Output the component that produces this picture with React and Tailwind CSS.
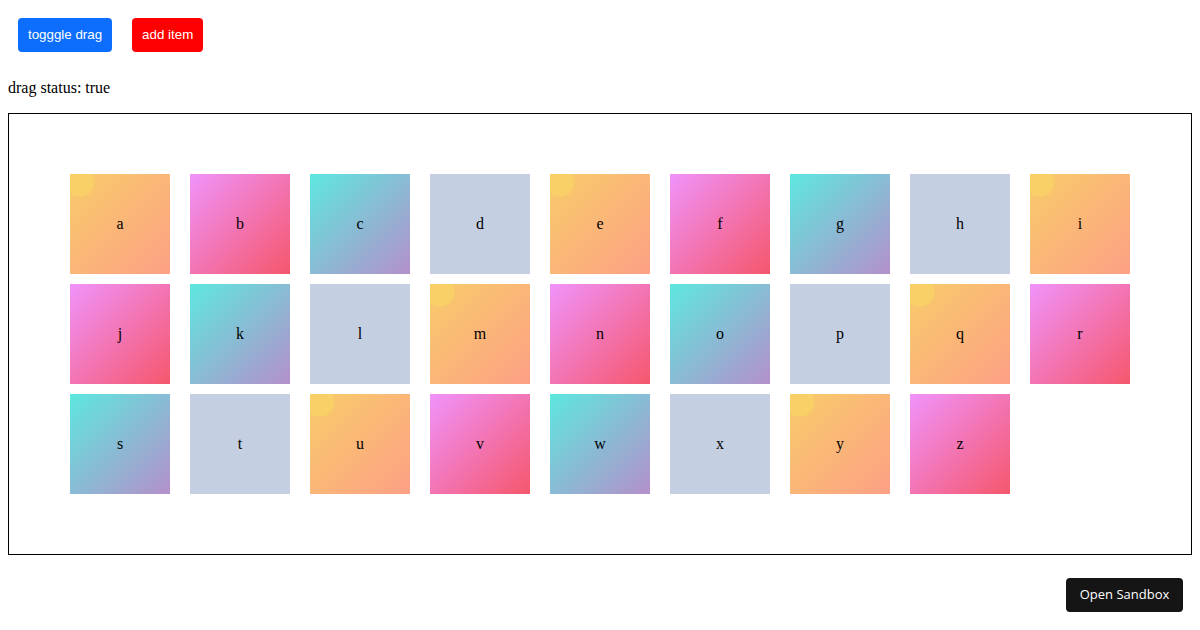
import React from "react";

const letters = "abcdefghijklmnopqrstuvwxyz".split("");

const styles = [
  "bg-[radial-gradient(circle_at_10px_8px,#f9cf68_0,#f9cf68_14px,transparent_15px),linear-gradient(135deg,#f8cc6a_0%,#fda085_100%)]",
  "bg-[linear-gradient(135deg,#f093fb_0%,#f5576c_100%)]",
  "bg-[linear-gradient(135deg,#5ee7df_0%,#b490ca_100%)]",
  "bg-[#c4cfe2]",
];

export default function App() {
  return (
    <div className="relative min-h-[630px] bg-white p-2" style={{ fontFamily: '"Liberation Serif", serif' }}>
      <div className="flex gap-5 p-[10px]">
        <button className="h-[34px] rounded-[4px] bg-[#0d6efd] px-[10px] text-[13.33px] text-white" style={{ fontFamily: '"Liberation Sans", Arial, sans-serif' }}>
          togggle drag
        </button>
        <button className="h-[34px] rounded-[4px] bg-[#ff0000] px-[10px] text-[13.33px] text-white" style={{ fontFamily: '"Liberation Sans", Arial, sans-serif' }}>
          add item
        </button>
      </div>
      <p className="mt-[16px] mb-[16px] text-[16px] leading-[19px] text-black">drag status: true</p>
      <div className="border border-black py-[60px]">
        <div className="grid grid-cols-[repeat(9,100px)] justify-center gap-x-5 gap-y-[10px]">
          {letters.map((l, i) => (
            <div
              key={l}
              className={`flex h-[100px] w-[100px] items-center justify-center text-[16px] text-black ${styles[i % 4]}`}
            >
              {l}
            </div>
          ))}
        </div>
      </div>
      <button
        className="absolute right-[17px] top-[578px] h-[34px] w-[117px] rounded-[4px] bg-[#151515] text-[13px] font-medium text-white"
        style={{ fontFamily: '"Open Sans", "Noto Sans", sans-serif' }}
      >
        Open Sandbox
      </button>
    </div>
  );
}
